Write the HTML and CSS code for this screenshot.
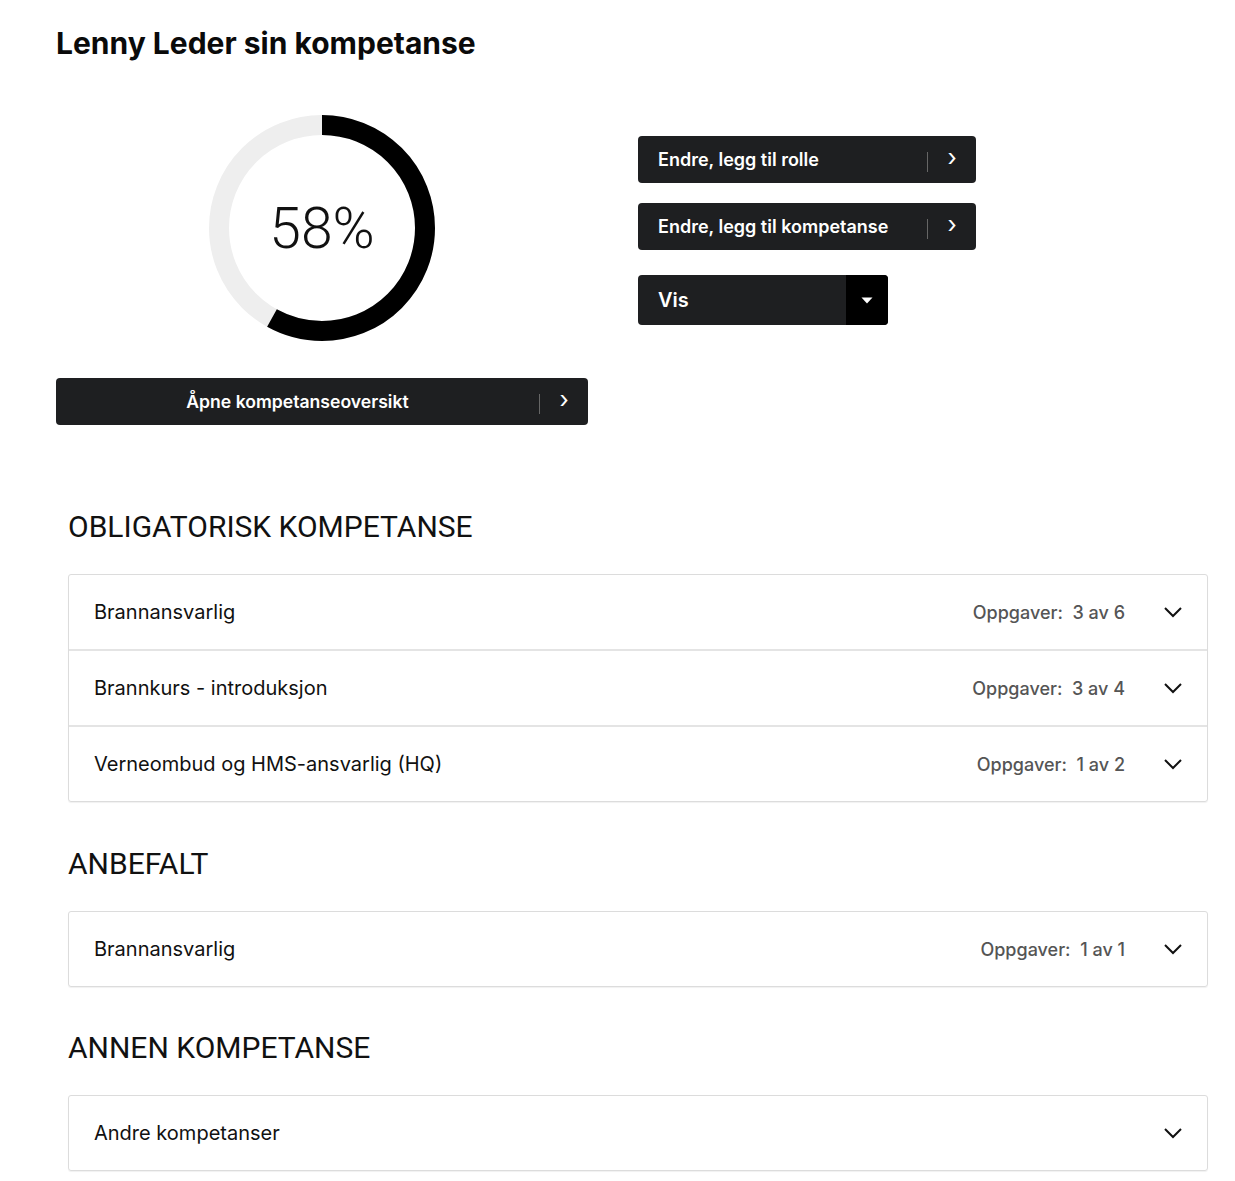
FILE: index.html
```html
<!DOCTYPE html>
<html lang="no">
<head>
<meta charset="utf-8">
<title>Lenny Leder sin kompetanse</title>
<link rel="stylesheet" href="styles.css">
</head>
<body>
<main class="page">
  <h1 class="title">Lenny Leder sin kompetanse</h1>
  <div class="top">
    <div class="left">
      <div class="ring">
        <svg width="226" height="226" viewBox="0 0 226 226">
          <circle cx="113" cy="113" r="103" fill="none" stroke="#eeeeee" stroke-width="20"/>
          <circle cx="113" cy="113" r="103" fill="none" stroke="#000" stroke-width="20"
            stroke-dasharray="375.36 647.17" transform="rotate(-90 113 113)"/>
        </svg>
        <span class="pct">58%</span>
      </div>
      <button class="btn btn-wide"><span class="btn-label">Åpne kompetanseoversikt</span><span class="sep"></span><span class="chev">&#8250;</span></button>
    </div>
    <div class="right">
      <button class="btn btn-action"><span class="btn-label">Endre, legg til rolle</span><span class="sep"></span><span class="chev">&#8250;</span></button>
      <button class="btn btn-action"><span class="btn-label">Endre, legg til kompetanse</span><span class="sep"></span><span class="chev">&#8250;</span></button>
      <div class="select">
        <span class="select-label">Vis</span>
        <span class="select-arrow"><svg width="12" height="7" viewBox="0 0 12 7"><path d="M0.5 0.5h11L6 6.5z" fill="#fff"/></svg></span>
      </div>
    </div>
  </div>

  <section class="group">
    <h2 class="group-title">OBLIGATORISK KOMPETANSE</h2>
    <div class="card">
      <div class="row"><span class="row-name">Brannansvarlig</span><span class="row-count">Oppgaver:&nbsp; 3 av 6</span><span class="row-chev"><svg width="20" height="12" viewBox="0 0 20 12"><path d="M2 2l8 8 8-8" fill="none" stroke="#111" stroke-width="2"/></svg></span></div>
      <div class="row"><span class="row-name">Brannkurs - introduksjon</span><span class="row-count">Oppgaver:&nbsp; 3 av 4</span><span class="row-chev"><svg width="20" height="12" viewBox="0 0 20 12"><path d="M2 2l8 8 8-8" fill="none" stroke="#111" stroke-width="2"/></svg></span></div>
      <div class="row"><span class="row-name">Verneombud og HMS-ansvarlig (HQ)</span><span class="row-count">Oppgaver:&nbsp; 1 av 2</span><span class="row-chev"><svg width="20" height="12" viewBox="0 0 20 12"><path d="M2 2l8 8 8-8" fill="none" stroke="#111" stroke-width="2"/></svg></span></div>
    </div>
  </section>

  <section class="group">
    <h2 class="group-title">ANBEFALT</h2>
    <div class="card">
      <div class="row"><span class="row-name">Brannansvarlig</span><span class="row-count">Oppgaver:&nbsp; 1 av 1</span><span class="row-chev"><svg width="20" height="12" viewBox="0 0 20 12"><path d="M2 2l8 8 8-8" fill="none" stroke="#111" stroke-width="2"/></svg></span></div>
    </div>
  </section>

  <section class="group">
    <h2 class="group-title">ANNEN KOMPETANSE</h2>
    <div class="card">
      <div class="row"><span class="row-name">Andre kompetanser</span><span class="row-count"></span><span class="row-chev"><svg width="20" height="12" viewBox="0 0 20 12"><path d="M2 2l8 8 8-8" fill="none" stroke="#111" stroke-width="2"/></svg></span></div>
    </div>
  </section>
</main>
</body>
</html>
```

FILE: styles.css
```css
* { box-sizing: border-box; }
html, body { margin: 0; padding: 0; background: #fff; }
body { font-family: Inter, "Liberation Sans", sans-serif; color: #111; }

.page { padding: 26px 27px 20px 56px; }

.title {
  margin: 0;
  font-size: 30px;
  line-height: 34px;
  font-weight: 700;
  color: #0a0a0a;
}

.top {
  display: flex;
  gap: 50px;
  margin-top: 55px;
}

.left {
  width: 532px;
  display: flex;
  flex-direction: column;
  align-items: center;
  gap: 37px;
}

.ring {
  position: relative;
  width: 226px;
  height: 226px;
}
.ring svg { display: block; }
.pct {
  position: absolute;
  inset: 0;
  display: flex;
  align-items: center;
  justify-content: center;
  font-family: Roboto, "Liberation Sans", sans-serif;
  font-weight: 300;
  font-size: 57px;
  color: #111;
}

.btn {
  display: flex;
  align-items: center;
  height: 47px;
  border: 0;
  border-radius: 4px;
  background: #1e1f21;
  color: #fff;
  font-family: Inter, "Liberation Sans", sans-serif;
  font-size: 18px;
  font-weight: 600;
  padding: 0 0 0 20px;
  cursor: pointer;
}
.btn-label { flex: 1; text-align: left; }
.sep {
  width: 1px;
  height: 20px;
  background: #666;
  margin-top: 4px;
}
.chev {
  width: 48px;
  text-align: center;
  font-size: 24px;
  font-weight: 400;
  line-height: 1;
  margin-top: -4px;
}

.btn-wide { width: 532px; padding-left: 0; font-size: 17.6px; }
.btn-wide .btn-label { text-align: center; }

.right {
  padding-top: 21px;
  display: flex;
  flex-direction: column;
  gap: 20px;
}
.btn-action { width: 338px; }

.select {
  display: flex;
  width: 250px;
  height: 50px;
  margin-top: 5px;
  border-radius: 4px;
  overflow: hidden;
  background: #1e1f21;
  color: #fff;
  font-size: 20px;
  font-weight: 600;
}
.select-label {
  flex: 1;
  display: flex;
  align-items: center;
  padding-left: 20px;
}
.select-arrow {
  width: 42px;
  background: #000;
  display: flex;
  align-items: center;
  justify-content: center;
}

.group { margin-left: 12px; }
.group-title {
  margin: 0;
  font-family: Roboto, "Liberation Sans", sans-serif;
  font-weight: 400;
  font-size: 30px;
  line-height: 36px;
  color: #111;
  padding-top: 84px;
  padding-bottom: 29px;
}
.group + .group .group-title { padding-top: 44px; }
.group + .group + .group .group-title { padding-top: 43px; }

.card {
  border: 1px solid #dcdcdc;
  border-radius: 3px;
  box-shadow: 0 1px 1px rgba(0,0,0,0.06);
}
.row {
  display: flex;
  align-items: center;
  height: 74px;
  padding: 0 24px 0 25px;
}
.row + .row { height: 76px; border-top: 2px solid #e4e4e4; }
.row-name { flex: 1; font-size: 20px; color: #111; }
.row-count { font-size: 18px; font-weight: 500; color: #555; }
.row-chev { width: 58px; display: flex; justify-content: flex-end; }
.row-chev svg { display: block; }
```
